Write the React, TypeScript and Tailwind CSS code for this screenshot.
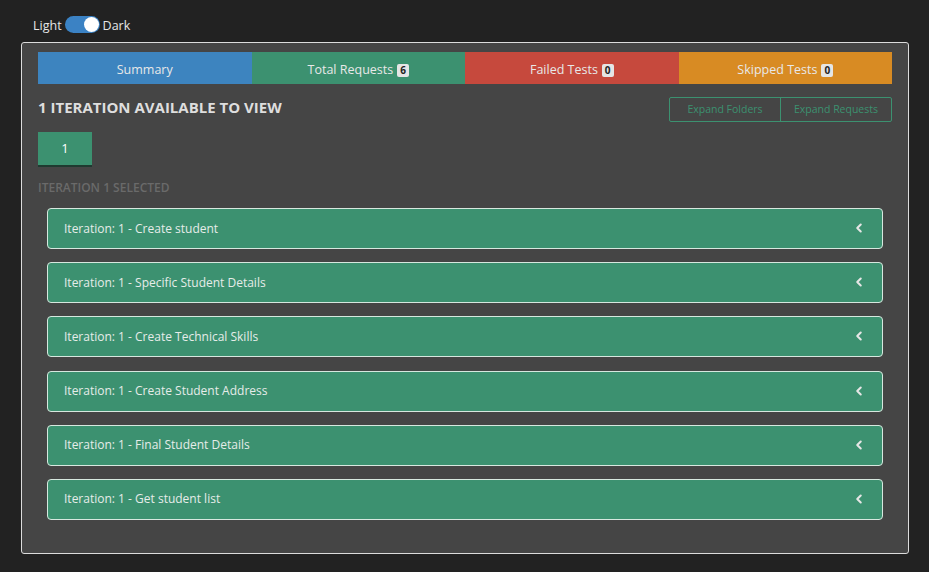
import React, { useState } from 'react';
import { ChevronLeft } from 'lucide-react';

const requests = [
  'Create student',
  'Specific Student Details',
  'Create Technical Skills',
  'Create Student Address',
  'Final Student Details',
  'Get student list',
];

export default function App() {
  const [dark, setDark] = useState(true);

  return (
    <div className="min-h-[572px] bg-[#222222] pl-[21px] pr-[20px] pt-[15px] pb-[19px] font-['Open_Sans',sans-serif] text-[12px]">
      <div className="flex items-center h-[20px] pl-[12px] pt-[3px] text-[#e6e6e6] text-[12.5px]">
        <span className="mr-[3px]">Light</span>
        <button
          onClick={() => setDark(!dark)}
          className="relative w-[35px] h-[17px] -mt-[5px] rounded-full bg-[#3b82c4]"
        >
          <span className="absolute right-[1px] top-[1px] w-[15px] h-[15px] rounded-full bg-white" />
        </button>
        <span className="ml-[3px]">Dark</span>
      </div>

      <div className="mt-[7px] border border-[#dcdcdc] rounded-[3px] bg-[#454545] pl-[16px] pr-[16px] pt-[9px] pb-[33px]">
        <div className="grid grid-cols-4 h-[32px] text-[12.5px] text-[#e8e8e8]">
          <div className="flex items-center justify-center bg-[#3d84bf] pt-[4px]">Summary</div>
          <div className="flex items-center justify-center bg-[#3c9170] pt-[4px]">
            Total Requests
            <span className="ml-[4px] px-[3px] rounded-[2px] bg-[#e5e5e5] text-[#222] text-[10px] font-bold leading-[13px]">6</span>
          </div>
          <div className="flex items-center justify-center bg-[#c6493d] pt-[4px]">
            Failed Tests
            <span className="ml-[4px] px-[3px] rounded-[2px] bg-[#e5e5e5] text-[#222] text-[10px] font-bold leading-[13px]">0</span>
          </div>
          <div className="flex items-center justify-center bg-[#d88b23] pt-[4px]">
            Skipped Tests
            <span className="ml-[4px] px-[3px] rounded-[2px] bg-[#e5e5e5] text-[#222] text-[10px] font-bold leading-[13px]">0</span>
          </div>
        </div>

        <div className="flex items-start justify-between mt-[13px]">
          <h2 className="text-[15px] font-bold text-[#dedede] leading-[20px]">1 ITERATION AVAILABLE TO VIEW</h2>
          <div className="flex border border-[#3c9170] rounded-[2px] text-[10.5px] text-[#3c9170] h-[25px]">
            <button className="w-[111px] border-r border-[#3c9170]">Expand Folders</button>
            <button className="w-[110px]">Expand Requests</button>
          </div>
        </div>

        <button className="mt-[10px] w-[54px] h-[35px] bg-[#3c9170] text-white border-b-2 border-[#1f3a30] text-[13px]">1</button>

        <div className="mt-[12px] text-[12px] font-semibold text-[#6a6a6a]">ITERATION 1 SELECTED</div>

        <div className="mt-[11px] px-[9px] flex flex-col gap-[13.2px]">
          {requests.map(r => (
            <div
              key={r}
              className="flex items-center justify-between h-[41px] pl-[16px] pr-[16px] bg-[#3c9170] border border-[#d7e8df] rounded-[4px] text-[#e6ece9]"
            >
              <span>Iteration: 1 - {r}</span>
              <ChevronLeft size={14} strokeWidth={3.5} className="text-[#e6e6e6] -mt-[1px]" />
            </div>
          ))}
        </div>
      </div>
    </div>
  );
}
